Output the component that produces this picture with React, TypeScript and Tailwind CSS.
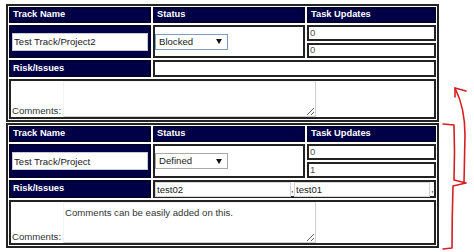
import type { ReactNode } from "react";

const font = "font-['Liberation_Sans',Arial,sans-serif]";

function Head({ children }: { children: ReactNode }) {
  return (
    <div className="flex items-center border-2 border-[#00002e] bg-[#000046] pl-[2px] text-[9.3px] font-bold leading-none text-white">
      {children}
    </div>
  );
}

function Select({ label, tone }: { label: string; tone: string }) {
  return (
    <div
      className={`flex h-[16px] w-[73px] items-center justify-between border bg-white pl-[3px] pr-[5px] text-[9.6px] leading-none text-[#222] ${tone}`}
    >
      <span>{label}</span>
      <svg width="6" height="5" viewBox="0 0 6 5">
        <path d="M0 0h6L3 5z" fill="#111" />
      </svg>
    </div>
  );
}

type BlockProps = {
  name: string;
  status: string;
  tone: string;
  updates: string[];
  rows: string;
  risk?: string[];
  comment: string;
  areaH: string;
};

function Block({ name, status, tone, updates, rows, risk, comment, areaH }: BlockProps) {
  return (
    <div className="w-[433px] border-2 border-[#232323] bg-white p-[1px]">
      <div className={`grid grid-cols-[142px_152px_129px] gap-[2px] ${rows}`}>
        <Head>Track Name</Head>
        <Head>Status</Head>
        <Head>Task Updates</Head>

        <div className="flex items-center border-2 border-[#00002e] bg-[#000046] pl-[1px]">
          <input
            readOnly
            value={name}
            className="h-[18px] w-[136px] border border-[#c9c9d6] bg-white px-[1px] text-[9.6px] text-[#222] outline-none"
          />
        </div>
        <div className="flex items-center border-2 border-[#222] bg-white">
          <Select label={status} tone={tone} />
        </div>
        <div className="flex flex-col gap-[2px]">
          {updates.map((u, i) => (
            <div
              key={i}
              className="flex flex-1 items-center border-2 border-[#222] bg-white pl-[1px] text-[9.6px] leading-none text-[#555]"
            >
              {u}
            </div>
          ))}
        </div>

        <Head>Risk/Issues</Head>
        <div className="col-span-2 flex items-center border-2 border-[#222] bg-white text-[9.6px] leading-none text-[#333]">
          {risk && (
            <>
              <input
                readOnly
                value={risk[0]}
                className="h-[15px] w-[136px] border border-[#d4d4d4] bg-white px-[1px] text-[9.6px] text-[#222] outline-none"
              />
              <span className="w-[3px] self-end pb-[2px]">,</span>
              <input
                readOnly
                value={risk[1]}
                className="h-[15px] w-[136px] border border-[#d4d4d4] bg-white px-[1px] text-[9.6px] text-[#222] outline-none"
              />
              <span className="ml-[1px] self-end pb-[2px]">,</span>
            </>
          )}
        </div>

        <div className="col-span-3 flex items-end border-2 border-[#222] bg-white pl-[1px] text-[9.6px] text-[#333]">
          <span className="mb-[1px] leading-none">Comments:</span>
          <textarea
            readOnly
            defaultValue={comment}
            className={`ml-[2px] w-[253px] ${areaH} border border-[#f3f3f3] border-b-[#cdcdcd] border-r-[#cdcdcd] bg-white pl-[1px] pt-[4px] text-[9.6px] leading-[11px] text-[#333] outline-none`}
          />
        </div>
      </div>
    </div>
  );
}

export default function App() {
  return (
    <div className={`relative h-[252px] w-[474px] overflow-hidden bg-white ${font}`}>
      <div className="flex flex-col gap-[1px] pl-[6px] pt-[4px]">
        <Block
          name="Test Track/Project2"
          status="Blocked"
          tone="border-[#7f9db9]"
          updates={["0", "0"]}
          rows="grid-rows-[16px_33px_17px_40px]"
          comment=""
          areaH="h-[36px]"
        />
        <Block
          name="Test Track/Project"
          status="Defined"
          tone="border-[#a9a9a9]"
          updates={["0", "1"]}
          rows="grid-rows-[16px_34px_18px_45px]"
          risk={["test02", "test01"]}
          comment="Comments can be easily added on this."
          areaH="h-[41px]"
        />
      </div>

      {/* red hand-drawn note over the page */}
      <svg
        className="pointer-events-none absolute left-0 top-0"
        width="474"
        height="252"
        viewBox="0 0 474 252"
        fill="none"
        stroke="#d61f1f"
        strokeWidth="1.6"
        strokeLinecap="round"
        strokeLinejoin="round"
      >
        <path d="M455 88 Q465 108 465 135 L464 183" />
        <path d="M455 88 L466 91 M455 88 L455 97" />
        <path d="M443 124 L454 125 Q455 152 454 180 L466 183 L453 186 Q452 218 452 248 L443 249" />
      </svg>
    </div>
  );
}
